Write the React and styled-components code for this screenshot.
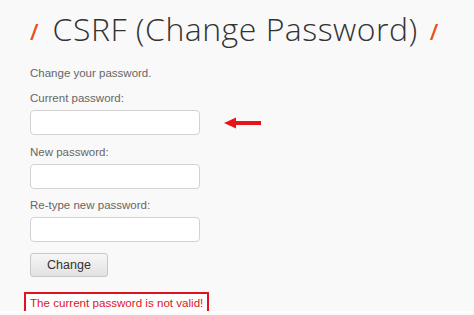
import React from "react";
import styled, { createGlobalStyle } from "styled-components";

const Global = createGlobalStyle`
  html, body { margin: 0; padding: 0; background: #f9f9f9; }
  body { font-family: "Liberation Sans", Arial, sans-serif; }
`;

const Page = styled.div`
  width: 474px;
  height: 313px;
  background: #f9f9f9;
  padding: 0 0 0 30px;
  box-sizing: border-box;
  border-bottom: 2px solid #fff;
  overflow: hidden;
`;

const Title = styled.h1`
  margin: 0;
  padding-top: 5px;
  height: 46px;
  display: flex;
  align-items: center;
  font-family: "Open Sans", "DejaVu Sans", sans-serif;
  font-weight: 300;
  font-size: 32px;
  letter-spacing: 0.5px;
  color: #333;
  white-space: nowrap;
`;

const Slash = styled.span`
  color: #e8501c;
  font-size: 22px;
  font-weight: 600;
  letter-spacing: 0;
  margin: ${(p) => (p.$end ? "0 0 0 12px" : "0 14px 0 0")};
  padding-top: 6px;
`;

const Intro = styled.p`
  margin: 15px 0 0;
  font-size: 11.5px;
  color: #666;
  line-height: 14px;
`;

const Field = styled.div`
  display: flex;
  flex-direction: column;
  margin-top: ${(p) => p.$top}px;
`;

const Label = styled.label`
  font-size: 11.5px;
  color: #666;
  line-height: 14px;
  margin-bottom: 5px;
`;

const InputRow = styled.div`
  display: flex;
  align-items: center;
  gap: 24px;
`;

const Input = styled.input`
  display: block;
  width: 170px;
  height: 25px;
  box-sizing: border-box;
  border: 1px solid #d2d2d2;
  border-radius: 4px;
  background: #fff;
  margin: 0;
`;

const Button = styled.button`
  display: block;
  margin-top: 11px;
  width: 78px;
  height: 24px;
  box-sizing: border-box;
  border: 1px solid #c8c8c8;
  border-radius: 3px;
  background: linear-gradient(#f6f6f6, #e2e2e2);
  font-family: "Liberation Sans", Arial, sans-serif;
  font-size: 12.5px;
  color: #333;
  padding: 0;
`;

const Error = styled.div`
  margin: 15px 0 0 -6px;
  width: 185px;
  height: 21px;
  box-sizing: border-box;
  border: 2px solid #e0141e;
  display: flex;
  align-items: center;
  padding-left: 4px;
  font-size: 11.6px;
  color: #e0141e;
  white-space: nowrap;
  background: #fff;
`;

function Arrow() {
  return (
    <svg width="37" height="12" viewBox="0 0 37 12">
      <polygon points="0,6 12,0.5 12,11.5" fill="#e5151b" />
      <rect x="10" y="4" width="27" height="4" fill="#e5151b" />
    </svg>
  );
}

export default function App() {
  return (
    <>
      <Global />
      <Page>
        <Title>
          <Slash>/</Slash>
          <span>CSRF (Change Password)</span>
          <Slash $end>/</Slash>
        </Title>
        <Intro>Change your password.</Intro>
        <Field $top={11}>
          <Label>Current password:</Label>
          <InputRow>
            <Input type="password" />
            <Arrow />
          </InputRow>
        </Field>
        <Field $top={10}>
          <Label>New password:</Label>
          <Input type="password" />
        </Field>
        <Field $top={9}>
          <Label>Re-type new password:</Label>
          <Input type="password" />
        </Field>
        <Button>Change</Button>
        <Error>The current password is not valid!</Error>
      </Page>
    </>
  );
}
